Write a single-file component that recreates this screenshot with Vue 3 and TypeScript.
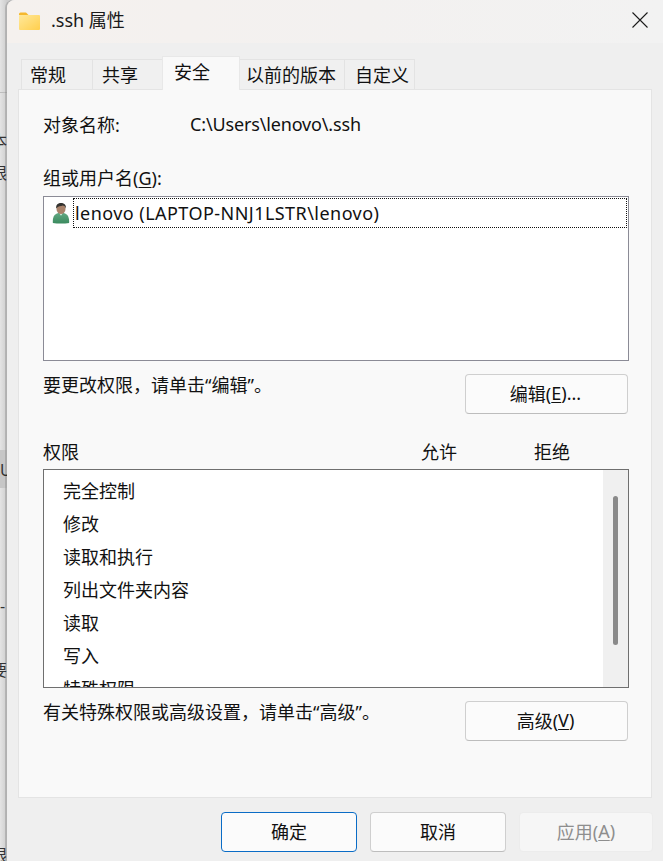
<script setup lang="ts">
const tabs = [
  { label: '常规', w: 72, pad: 8, active: false },
  { label: '共享', w: 71, pad: 9, active: false },
  { label: '安全', w: 78, pad: 11, active: true },
  { label: '以前的版本', w: 106, pad: 6, active: false },
  { label: '自定义', w: 71, pad: 10, active: false },
]
const perms = ['完全控制', '修改', '读取和执行', '列出文件夹内容', '读取', '写入', '特殊权限']
</script>

<template>
  <div class="screen">
    <div class="behind">
      <span class="b1">本</span>
      <span class="b2">限</span>
      <span class="b3">U</span>
      <span class="b4">-</span>
      <span class="b5">要</span>
      <span class="b6">限</span>
    </div>
    <div class="dialog">
      <header class="titlebar">
        <div class="title">
          <svg class="folder" width="22" height="18" viewBox="0 0 22 18">
            <defs>
              <linearGradient id="fg" x1="0" y1="0" x2="1" y2="1">
                <stop offset="0" stop-color="#ffe89a" />
                <stop offset="1" stop-color="#ffcf4d" />
              </linearGradient>
            </defs>
            <path d="M0 2a1.500 1.500 0 0 1 1.500-1.500h4.500c1 0 1.500 .4 2 1l1.500 1.500h-9.500z" fill="#f5b82e" />
            <rect x="0" y="3" width="21" height="15" rx="1" fill="url(#fg)" />
          </svg>
          <span>.ssh 属性</span>
        </div>
        <svg class="close" width="16" height="16" viewBox="0 0 16 16">
          <path d="M.5 .5L15.500 15.500M15.500 .5L.5 15.500" stroke="#1a1a1a" stroke-width="1.100" fill="none" />
        </svg>
      </header>

      <div class="body">
        <div class="tabs">
          <div
            v-for="t in tabs"
            :key="t.label"
            class="tab"
            :class="{ active: t.active }"
            :style="{ width: t.w + 'px', paddingLeft: t.pad + 'px' }"
          >
            {{ t.label }}
          </div>
        </div>

        <section class="panel">
          <div class="object">
            <span class="object-label">对象名称:</span>
            <span class="object-path">C:\Users\lenovo\.ssh</span>
          </div>

          <div class="group-label">组或用户名(<u>G</u>):</div>
          <div class="userbox">
            <div class="user-row">
              <svg class="avatar" width="18" height="22" viewBox="0 0 20 24">
                <defs>
                  <linearGradient id="sh" x1="0" y1="0" x2="0" y2="1">
                    <stop offset="0" stop-color="#62a883" />
                    <stop offset="1" stop-color="#3a8a5e" />
                  </linearGradient>
                </defs>
                <path d="M1 23c-.7-6 1.500-10 6-11h6c4.500 1 6.500 5 6 11-5 1-13 1-18 0z" fill="url(#sh)" />
                <path d="M8 12l2 3 2-3z" fill="#d8efe0" />
                <ellipse cx="10" cy="7.500" rx="5" ry="5.700" fill="#a9826a" />
                <path d="M4.700 7C4 2.500 7 .8 10 .8s6 1.700 5.500 6.200c-.8-2-2-3-3.500-3.200-2 .8-5.500.7-7.300 3.200z" fill="#33322f" />
              </svg>
              <div class="user-name">lenovo (LAPTOP-NNJ1LSTR\lenovo)</div>
            </div>
          </div>

          <div class="edit-row">
            <span class="hint">要更改权限，请单击“编辑”。</span>
            <button class="btn wide">编辑(<u>E</u>)...</button>
          </div>

          <div class="perm-head">
            <span class="perm-title">权限</span>
            <span class="perm-allow">允许</span>
            <span class="perm-deny">拒绝</span>
          </div>
          <div class="permbox">
            <ul class="perm-list">
              <li v-for="p in perms" :key="p">{{ p }}</li>
            </ul>
            <div class="scrollbar"><div class="thumb"></div></div>
          </div>

          <div class="adv-row">
            <span class="hint">有关特殊权限或高级设置，请单击“高级”。</span>
            <button class="btn wide">高级(<u>V</u>)</button>
          </div>
        </section>

        <footer class="footer">
          <button class="btn foot primary">确定</button>
          <button class="btn foot">取消</button>
          <button class="btn foot disabled">应用(<u>A</u>)</button>
        </footer>
      </div>
    </div>
  </div>
</template>

<style>
html, body { margin: 0; padding: 0; background: #efefef; }
</style>

<style scoped>
.screen {
  position: relative;
  width: 663px;
  height: 861px;
  overflow: hidden;
  display: flex;
  background: #f2f2f2;
  font-family: "Noto Sans", "Noto Sans CJK SC", sans-serif;
  font-size: 18px;
  color: #111;
}
.behind {
  position: absolute;
  left: 0;
  top: 0;
  width: 16px;
  height: 861px;
  overflow: hidden;
  color: #333;
  font-size: 16px;
  background:
    linear-gradient(#c6c6c6, #c6c6c6) 0 450px / 7px 38px no-repeat,
    linear-gradient(#bdbdbd, #bdbdbd) 0 92px / 7px 1px no-repeat,
    linear-gradient(90deg, #e4e4e4, #cdcdcd 7px);
}
.behind span { position: absolute; left: -9px; line-height: 20px; }
.behind .b1 { top: 131px; }
.behind .b2 { top: 163px; }
.behind .b3 { top: 460px; left: 0; }
.behind .b4 { top: 596px; left: 0; }
.behind .b5 { top: 660px; left: -9px; }
.behind .b6 { top: 845px; }
.dialog {
  position: absolute;
  left: 7px;
  top: 0;
  width: 656px;
  height: 861px;
  display: flex;
  flex-direction: column;
  background: #efefef;
  box-shadow: -2px 0 0 rgba(0, 0, 0, 0.14);
  border-top-left-radius: 8px;
  box-sizing: border-box;
}
.titlebar {
  height: 43px;
  flex: none;
  box-sizing: border-box;
  display: flex;
  align-items: center;
  justify-content: space-between;
  padding: 0 15px 1px 12px;
  background: linear-gradient(90deg, #f5f1ee 0%, #f3f1f0 55%, #f2f2f2 100%);
  border-top-left-radius: 8px;
}
.title { display: flex; align-items: center; gap: 10px; font-size: 18px; color: #1a1a1a; line-height: 24px; margin-top: -2px; }
.folder { margin-top: 2px; }
.close { margin-top: -3px; }
.body { flex: 1; display: flex; flex-direction: column; padding: 0 0 0 11px; min-height: 0; }
.tabs { height: 46px; display: flex; align-items: flex-end; padding-left: 3px; flex: none; }
.tab {
  height: 30px;
  box-sizing: border-box;
  border: 1px solid #e3e3e3;
  border-bottom: none;
  margin-right: -1px;
  background: #f0f0f0;
  display: flex;
  align-items: center;
  justify-content: flex-start;
  line-height: 1;
  color: #111;
  white-space: nowrap;
}
.tab.active {
  height: 34px;
  background: #f9f9f9;
  padding-bottom: 4px;
  position: relative;
  z-index: 1;
  margin-bottom: -1px;
  border-color: #e8e8e8;
}
.panel {
  width: 634px;
  height: 709px;
  flex: none;
  box-sizing: border-box;
  background: #f9f9f9;
  border: 1px solid #e4e4e4;
  padding: 0 0 0 24px;
  display: flex;
  flex-direction: column;
}
.object { display: flex; height: 26px; margin-top: 21px; align-items: center; }
.object-label { width: 147px; }
.object-path { letter-spacing: -0.15px; }
.group-label { margin-top: 28px; height: 26px; line-height: 26px; }
u { text-underline-offset: 2px; text-decoration-thickness: 1px; }
.userbox {
  margin-top: 5px;
  width: 586px;
  height: 165px;
  box-sizing: border-box;
  background: #fff;
  border: 1px solid #8b8b96;
  padding: 1px 1px 0 0;
}
.user-row { display: flex; align-items: center; height: 30px; }
.avatar { margin: 0 3px 0 8px; flex: none; }
.user-name {
  flex: 1;
  box-sizing: border-box;
  height: 30px;
  line-height: 28px;
  border: 1px dotted #111;
  padding-left: 1px;
  letter-spacing: 0.45px;
}
.edit-row { display: flex; justify-content: space-between; width: 585px; margin-top: 13px; height: 40px; }
.hint { line-height: 26px; margin-top: -2px; }
.btn {
  font: inherit;
  color: #111;
  background: #fbfbfb;
  border: 1px solid #cfcfcf;
  border-bottom-color: #bdbdbd;
  border-radius: 4px;
  box-sizing: border-box;
  padding: 0 2px 2px 0;
  height: 40px;
  display: flex;
  align-items: center;
  justify-content: center;
}
.btn.wide { width: 163px; }
.perm-head { position: relative; height: 26px; margin-top: 25px; line-height: 26px; }
.perm-allow { position: absolute; left: 378px; top: 0; }
.perm-deny { position: absolute; left: 491px; top: 0; }
.permbox {
  margin-top: 4px;
  width: 586px;
  height: 219px;
  box-sizing: border-box;
  background: #fff;
  border: 1px solid #6f6f6f;
  display: flex;
  overflow: hidden;
}
.perm-list { list-style: none; margin: 0; padding: 5px 0 0 19px; flex: 1; }
.perm-list li { height: 33px; line-height: 33px; white-space: nowrap; }
.scrollbar { width: 25px; background: #f0f0f0; flex: none; padding-top: 26px; box-sizing: border-box; }
.thumb { width: 5px; height: 149px; margin-left: 10px; background: #8a8a8a; border-radius: 3px; }
.adv-row { display: flex; justify-content: space-between; width: 585px; margin-top: 13px; height: 40px; }
.footer { display: flex; height: 40px; margin-top: 14px; padding-left: 203px; gap: 13px; flex: none; }
.btn.foot { width: 136px; padding-right: 0; }
.btn.primary { border: 1px solid #0a6cc6; }
.btn.disabled { color: #8e8e8e; background: #f6f6f6; border-color: #ececec; width: 134px; }
</style>
